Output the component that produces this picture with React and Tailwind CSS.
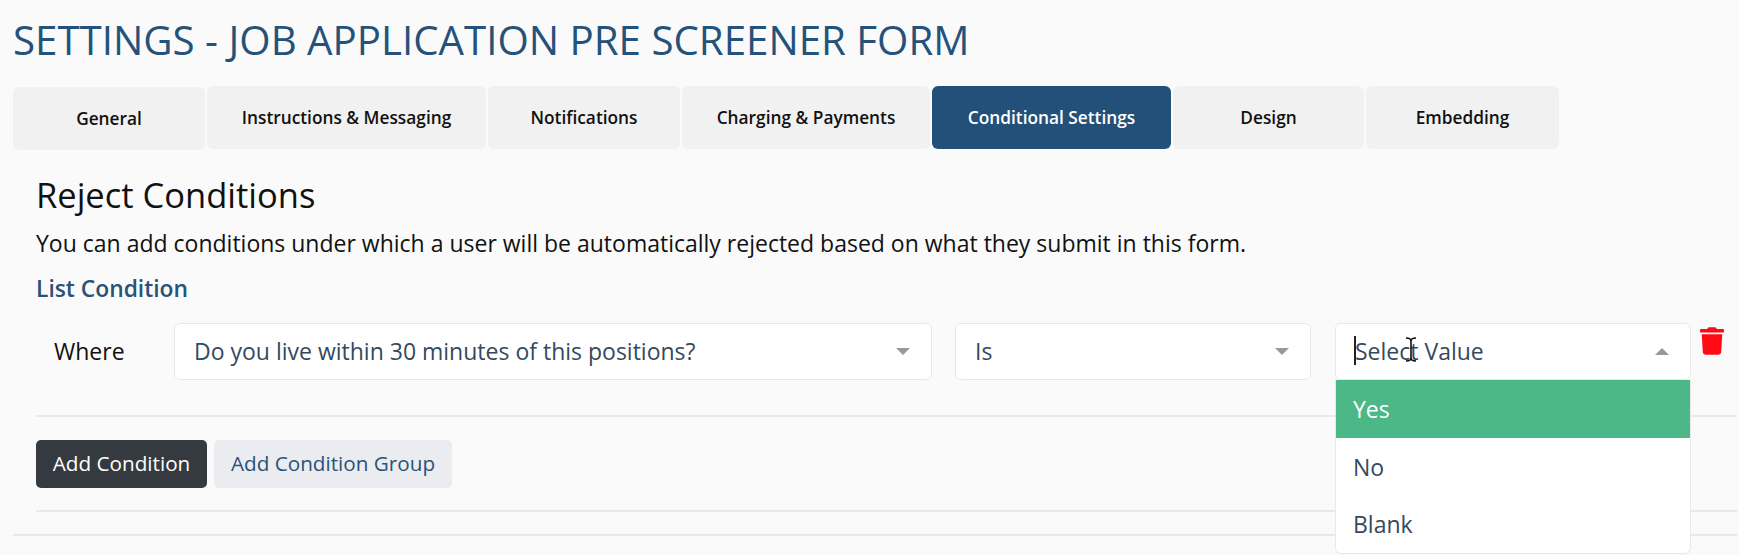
import React from 'react';
import { FaTrash } from 'react-icons/fa';

const tabs = [
  { label: 'General', width: 'w-[192px]', offset: 'mt-px' },
  { label: 'Instructions & Messaging', width: 'w-[279px]' },
  { label: 'Notifications', width: 'w-[192px]' },
  { label: 'Charging & Payments', width: 'w-[248px]' },
  { label: 'Conditional Settings', width: 'w-[239px]', active: true },
  { label: 'Design', width: 'w-[191px]' },
  { label: 'Embedding', width: 'w-[193px]' },
];

const Caret = ({ up }) => (
  <svg width="16" height="9" viewBox="0 0 16 9" className="shrink-0 text-[#999999]" fill="currentColor">
    <path d={up ? 'M8 1 L15 8 L1 8 Z' : 'M1 1 L15 1 L8 8 Z'} />
  </svg>
);

const Select = ({ value, width }) => (
  <div className={`${width} h-[57px] flex items-center justify-between pl-[19px] pr-[20px] bg-white border border-[#e8e8e8] rounded-[6px] text-[23px] text-[#35495e]`}>
    <span>{value}</span>
    <Caret />
  </div>
);

const App = () => {
  return (
    <div className="h-[555px] overflow-hidden bg-[#fafafa] pl-[13px] pr-[2px] font-['Open_Sans',sans-serif]">
      <h1 className="pt-[14px] text-[40.25px] leading-[52px] font-normal text-[#24527a] whitespace-nowrap">
        SETTINGS - JOB APPLICATION PRE SCREENER FORM
      </h1>

      {/* Tabs */}
      <div className="flex gap-[2px] mt-[20px]">
        {tabs.map((tab) => (
          <div
            key={tab.label}
            className={`${tab.width} ${tab.offset || ''} h-[63px] flex items-center justify-center rounded-[6px] text-[17.3px] font-semibold ${
              tab.active ? 'bg-[#235078] text-white' : 'bg-[#f1f1f1] text-[#111111]'
            }`}
          >
            {tab.label}
          </div>
        ))}
      </div>

      <div className="pl-[23px]">
        <h2 className="mt-[22px] text-[34.5px] leading-[45px] text-[#111111]">Reject Conditions</h2>
        <p className="mt-[13px] text-[23px] leading-[27px] text-[#111111] whitespace-nowrap">
          You can add conditions under which a user will be automatically rejected based on what they submit in this form.
        </p>
        <h3 className="mt-[18px] text-[22.8px] leading-[27px] font-semibold text-[#2a5278]">List Condition</h3>

        {/* Condition row */}
        <div className="flex items-center mt-[21px]">
          <span className="w-[138px] pl-[18px] text-[23px] text-[#111111]">Where</span>
          <Select value="Do you live within 30 minutes of this positions?" width="w-[758px]" />
          <div className="ml-[23px]">
            <Select value="Is" width="w-[356px]" />
          </div>
          <div className="relative ml-[24px] w-[356px] h-[57px] flex items-center justify-between pl-[19px] pr-[20px] bg-white border border-[#e8e8e8] rounded-[6px] text-[23px] text-[#35495e]">
            <span>Select Value</span>
            <Caret up />
            {/* text caret and mouse pointer */}
            <span className="absolute left-[18px] top-[12px] w-[2px] h-[29px] bg-[#222222]" />
            <svg width="14" height="25" viewBox="0 0 14 25" className="absolute left-[68px] top-[13px] text-[#111111]" fill="none" stroke="currentColor" strokeWidth="1.6">
              <path d="M2 1 C5 1 7 2 7 4 L7 21 C7 23 5 24 2 24 M12 1 C9 1 7 2 7 4 M7 21 C7 23 9 24 12 24" />
            </svg>
            {/* Open dropdown */}
            <div className="absolute -left-px top-[56px] w-[356px] bg-white border border-t-0 border-[#e8e8e8] rounded-b-[6px] overflow-hidden">
              <div className="h-[58px] flex items-center pl-[17px] bg-[#4cb887] text-white">Yes</div>
              <div className="h-[58px] flex items-center pl-[17px]">No</div>
              <div className="h-[57px] flex items-center pl-[17px]">Blank</div>
            </div>
          </div>
          <FaTrash className="ml-[9px] mb-[21px] text-[#ff0a14] w-[24px] h-[28px]" />
        </div>

        <div className="mt-[35px] border-t-2 border-[#e9e9e9]" />

        <div className="flex gap-[7px] mt-[23px]">
          <button className="w-[171px] h-[48px] rounded-[5px] bg-[#343a40] text-white text-[20.7px]">Add Condition</button>
          <button className="w-[238px] h-[48px] rounded-[5px] bg-[#eaecf0] text-[#2a5278] text-[20.7px]">Add Condition Group</button>
        </div>

        <div className="mt-[22px] border-t-2 border-[#e9e9e9]" />
      </div>
      <div className="mt-[22px] border-t-2 border-[#e9e9e9]" />
    </div>
  );
};

export default App;
